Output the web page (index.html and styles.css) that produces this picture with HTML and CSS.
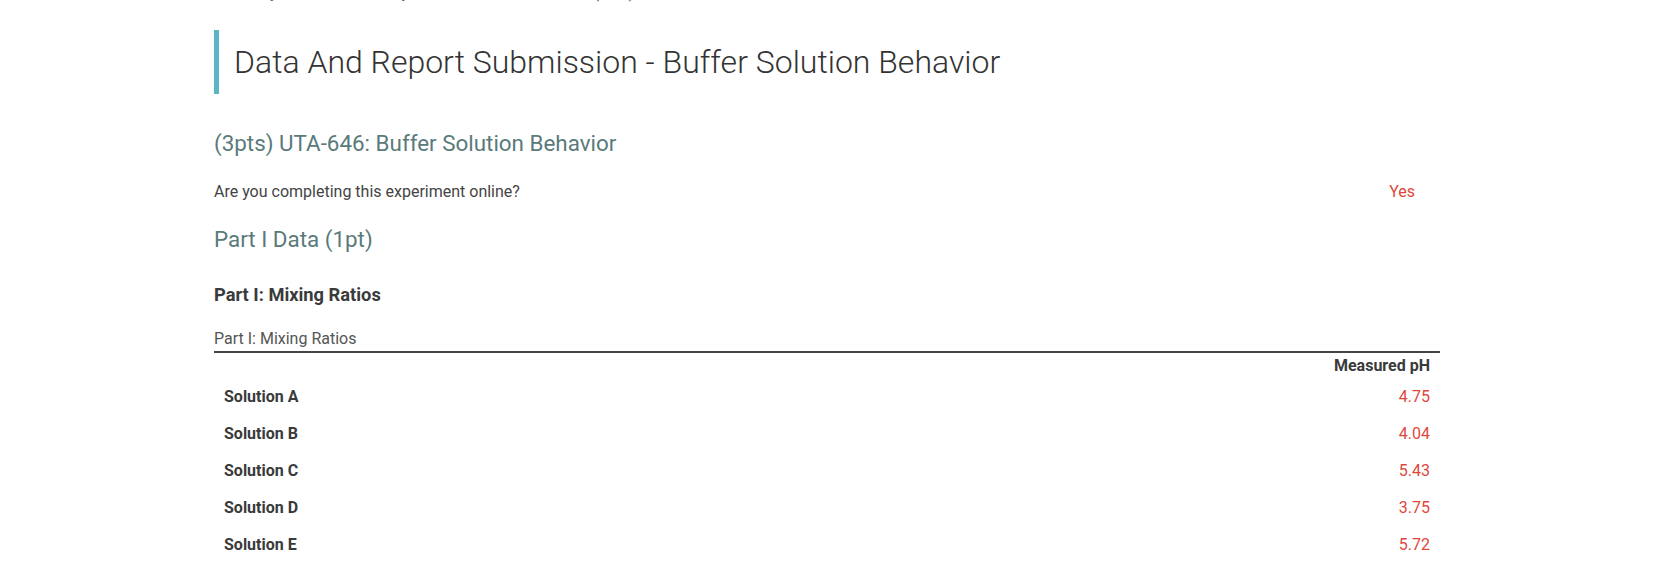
FILE: index.html
```html
<!DOCTYPE html>
<html>
<head>
  <title>Data And Report Submission - Buffer Solution Behavior</title>
  <meta name="viewport" content="width=device-width, initial-scale=1.0">
  <link rel="stylesheet" href="styles.css">
</head>
<body>
  <div class="page">
    <div class="meta">Saved by J. Smith on Friday, Mar 5, 2021 at 10:42 AM (CST)</div>

    <h1 class="page-title">Data And Report Submission - Buffer Solution Behavior</h1>

    <h2 class="section-title">(3pts) UTA-646: Buffer Solution Behavior</h2>

    <div class="question">
      <div class="question-text">Are you completing this experiment online?</div>
      <div class="answer">Yes</div>
    </div>

    <h2 class="section-title part">Part I Data (1pt)</h2>

    <h3 class="table-title">Part I: Mixing Ratios</h3>

    <table class="data-table">
      <caption>Part I: Mixing Ratios</caption>
      <thead>
        <tr>
          <th></th>
          <th class="num">Measured pH</th>
        </tr>
      </thead>
      <tbody>
        <tr><th>Solution A</th><td class="num answer">4.75</td></tr>
        <tr><th>Solution B</th><td class="num answer">4.04</td></tr>
        <tr><th>Solution C</th><td class="num answer">5.43</td></tr>
        <tr><th>Solution D</th><td class="num answer">3.75</td></tr>
        <tr><th>Solution E</th><td class="num answer">5.72</td></tr>
      </tbody>
    </table>
  </div>
</body>
</html>
```

FILE: styles.css
```css
body {
  font-family: Roboto, "Liberation Sans", sans-serif;
  margin: 0;
  padding: 0;
  background: #fff;
  color: #444;
  overflow: hidden;
}
.page {
  width: 1226px;
  margin-left: 214px;
}
.meta {
  font-size: 16px;
  line-height: 20px;
  color: #666;
  margin-top: -17px;
}
.page-title {
  font-size: 32px;
  font-weight: 300;
  color: #333;
  margin: 27px 0 0;
  height: 64px;
  line-height: 64px;
  border-left: 5px solid #5bb5c4;
  padding-left: 15px;
}
.section-title {
  font-size: 22.4px;
  font-weight: 400;
  line-height: 26px;
  color: #5a7a7b;
  margin: 36px 0 0;
}
.section-title.part {
  margin-top: 24px;
}
.question {
  display: flex;
  justify-content: space-between;
  font-size: 16px;
  line-height: 20px;
  margin-top: 26px;
}
.question .answer {
  padding-right: 25px;
}
.answer {
  color: #e0473c;
}
.table-title {
  font-size: 18.3px;
  font-weight: 700;
  line-height: 22px;
  color: #3a3a3a;
  margin: 32px 0 0;
}
.data-table {
  width: 100%;
  border-collapse: collapse;
  margin-top: 23px;
  font-size: 16px;
  line-height: 20px;
}
.data-table caption {
  text-align: left;
  color: #555;
  padding-bottom: 2px;
  border-bottom: 2px solid #444;
}
.data-table thead th {
  font-weight: 700;
  color: #3a3a3a;
  padding: 3px 10px 2px;
}
.data-table tbody th {
  text-align: left;
  font-weight: 700;
  color: #3a3a3a;
  padding: 8px 10px;
  line-height: 21px;
}
.data-table tbody td {
  padding: 8px 10px;
  line-height: 21px;
}
.num {
  text-align: right;
}
```
